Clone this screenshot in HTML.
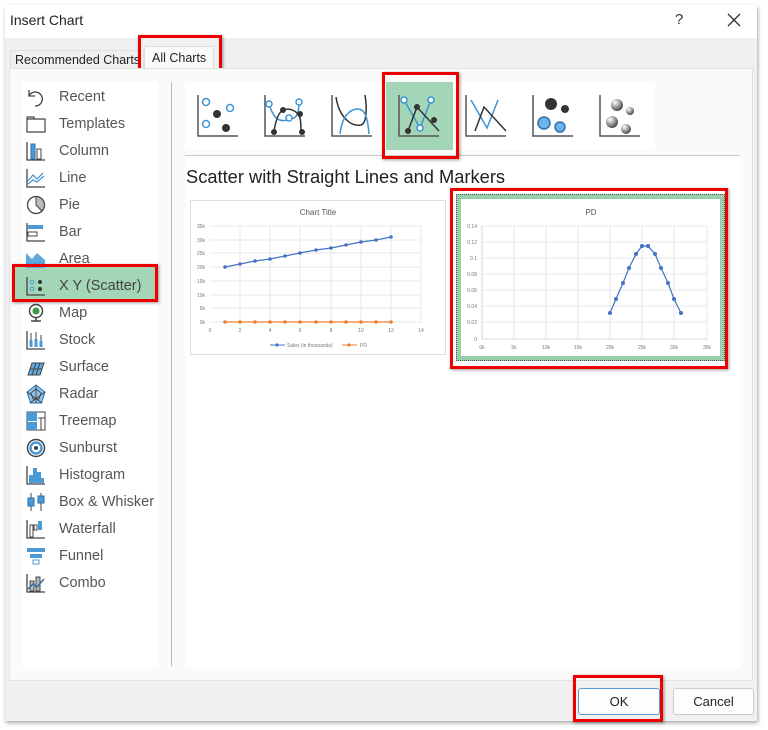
<!DOCTYPE html>
<html><head><meta charset="utf-8"><style>
*{margin:0;padding:0;box-sizing:border-box}
body{width:768px;height:730px;background:#fff;font-family:"Liberation Sans",sans-serif;position:relative;overflow:hidden;color:#333}
.a{position:absolute}
.win{left:5px;top:5px;width:752px;height:716px;background:#f0f0f0;box-shadow:1px 2px 4px rgba(0,0,0,.35)}
.red{border:3px solid #e00;box-shadow:1px 1px 3px rgba(0,0,0,.4)}
.item{position:absolute;left:26px;height:27px;width:130px;font-size:14.5px;color:#555;line-height:27px;margin-top:2px}
.item span{position:absolute;left:33px}
.item svg{position:absolute;left:0;top:3px}
</style></head><body>
<div class="a win"></div>
<div class="a" style="left:5px;top:5px;width:752px;height:33px;background:#fff"></div>
<div class="a" style="left:10px;top:12px;font-size:14px;color:#222">Insert Chart</div>
<div class="a" style="left:675px;top:11px;font-size:15px;color:#333">?</div>
<svg class="a" style="left:727px;top:13px" width="14" height="14"><path d="M1 1L13 13M13 1L1 13" stroke="#333" stroke-width="1.3"/></svg>
<!-- tabs -->
<div class="a" style="left:10px;top:50px;width:134px;height:19px;background:#f0f0f0;border:1px solid #e0e0e0;border-bottom:none"></div>
<div class="a" style="left:15px;top:53px;font-size:12.5px;color:#222">Recommended Charts</div>
<div class="a" style="left:144px;top:46px;width:70px;height:23px;background:#fafafa;border:1px solid #ddd;border-bottom:none"></div>
<div class="a" style="left:152px;top:51px;font-size:12.5px;color:#222">All Charts</div>
<div class="a red" style="left:138px;top:35px;width:84px;height:40px"></div>
<!-- panel -->
<div class="a" style="left:9px;top:68px;width:744px;height:613px;background:#fafafa;border:1px solid #e3e3e3"></div>
<div class="a" style="left:22px;top:82px;width:136px;height:586px;background:#fff"></div>
<div class="a" style="left:171px;top:82px;width:1px;height:584px;background:#bbb"></div>
<div class="a" style="left:185px;top:82px;width:555px;height:586px;background:#fff"></div>
<div class="a" style="left:655px;top:82px;width:85px;height:68px;background:#fafafa"></div>
<div class="a" style="left:185px;top:150px;width:555px;height:6px;background:#fafafa"></div>
<div class="a" style="left:185px;top:155px;width:555px;height:1px;background:#ccc"></div>
<!-- list -->
<div class="a" style="left:15px;top:267px;width:141px;height:33px;background:#a3d5b7"></div>
<div class="item" style="top:82px"><svg width="20" height="20"><path d="M3 3v6h6M3 9a7 7 0 1 1 6 10" fill="none" stroke="#444" stroke-width="1.3"/></svg><span>Recent</span></div>
<div class="item" style="top:109px"><svg width="20" height="20"><path d="M1 3h7v2h11v13H1z M1 5h7" fill="none" stroke="#444" stroke-width="1.2"/></svg><span>Templates</span></div>
<div class="item" style="top:136px"><svg width="20" height="20"><path d="M1 1v18h18" fill="none" stroke="#444" stroke-width="1.3"/><rect x="5" y="3" width="4" height="15" fill="#4a9ad8" stroke="#2f6ea8"/><rect x="11" y="8" width="4" height="10" fill="none" stroke="#444"/></svg><span>Column</span></div>
<div class="item" style="top:163px"><svg width="20" height="20"><path d="M1 1v18h18" fill="none" stroke="#444" stroke-width="1.3"/><path d="M2 13l5-6 4 4 6-6M2 16l5-4 4 2 7-6" fill="none" stroke="#4a9ad8" stroke-width="1.3"/></svg><span>Line</span></div>
<div class="item" style="top:190px"><svg width="20" height="20"><circle cx="10" cy="10" r="8.5" fill="#fff" stroke="#444" stroke-width="1.3"/><path d="M10 10V1.5A8.5 8.5 0 0 1 16 16z" fill="#bbb" stroke="#444"/></svg><span>Pie</span></div>
<div class="item" style="top:217px"><svg width="20" height="20"><path d="M1 1v18h18" fill="none" stroke="#444" stroke-width="1.3"/><rect x="2" y="3" width="15" height="4" fill="#4a9ad8"/><rect x="2" y="10" width="9" height="4" fill="none" stroke="#444"/></svg><span>Bar</span></div>
<div class="item" style="top:244px"><svg width="20" height="20"><path d="M0 4l6 6 5-6 8 7v8H0z" fill="#5fa8e0"/></svg><span>Area</span></div>
<div class="item" style="top:271px;color:#444"><svg width="20" height="20"><path d="M1 1v18h18" fill="none" stroke="#444" stroke-width="1.3"/><circle cx="6" cy="6" r="1.8" fill="none" stroke="#4a9ad8"/><circle cx="6" cy="13" r="1.8" fill="none" stroke="#4a9ad8"/><circle cx="14" cy="6" r="2" fill="#333"/><circle cx="14" cy="13" r="2" fill="#333"/></svg><span>X Y (Scatter)</span></div>
<div class="item" style="top:298px"><svg width="20" height="20"><circle cx="10" cy="8" r="6.5" fill="#fff" stroke="#444" stroke-width="1.5"/><circle cx="10" cy="8" r="3.5" fill="#3a9a4a"/><path d="M5 18h10M10 15v3" stroke="#444" stroke-width="1.5"/></svg><span>Map</span></div>
<div class="item" style="top:325px"><svg width="20" height="20"><path d="M1 1v18h18" fill="none" stroke="#444" stroke-width="1.3"/><path d="M5 3v14M10 2v15M15 5v12" stroke="#444"/><rect x="3.5" y="10" width="3" height="7" fill="#4a9ad8"/><rect x="8.5" y="9" width="3" height="8" fill="#4a9ad8"/><rect x="13.5" y="11" width="3" height="6" fill="#4a9ad8"/></svg><span>Stock</span></div>
<div class="item" style="top:352px"><svg width="20" height="20"><path d="M2 18l4-12h12l-4 12z" fill="#5fa8e0" stroke="#444"/><path d="M4 12h12M10 6l-4 12M14 6l-4 12" stroke="#444"/></svg><span>Surface</span></div>
<div class="item" style="top:379px"><svg width="20" height="20"><path d="M10 1l9 7-3.5 11h-11L1 8z" fill="#8cc4ec" stroke="#2f6ea8"/><path d="M10 1v18M1 8l15 11M19 8L4 19M10 5l5 4-2 6H7L5 9z" fill="none" stroke="#444" stroke-width=".9"/></svg><span>Radar</span></div>
<div class="item" style="top:406px"><svg width="20" height="20"><rect x="1" y="1" width="18" height="18" fill="#fff" stroke="#444"/><rect x="1" y="1" width="10" height="9" fill="#4a9ad8"/><rect x="1" y="11" width="10" height="8" fill="#4a9ad8"/><path d="M12 7h7M15 7v12" stroke="#444"/></svg><span>Treemap</span></div>
<div class="item" style="top:433px"><svg width="20" height="20"><circle cx="10" cy="10" r="8.5" fill="none" stroke="#444" stroke-width="1.5"/><circle cx="10" cy="10" r="5.5" fill="none" stroke="#4a9ad8" stroke-width="2.5"/><circle cx="10" cy="10" r="2" fill="#444"/></svg><span>Sunburst</span></div>
<div class="item" style="top:460px"><svg width="20" height="20"><path d="M1 1v18h18" fill="none" stroke="#444" stroke-width="1.3"/><rect x="3" y="10" width="4" height="8" fill="#4a9ad8"/><rect x="7" y="3" width="4" height="15" fill="#4a9ad8"/><rect x="11" y="7" width="4" height="11" fill="#4a9ad8"/><rect x="15" y="13" width="3" height="5" fill="#4a9ad8"/></svg><span>Histogram</span></div>
<div class="item" style="top:487px"><svg width="20" height="20"><path d="M5 1v18M15 1v18" stroke="#444"/><rect x="2" y="6" width="6" height="8" fill="#4a9ad8" stroke="#2f6ea8"/><rect x="12" y="4" width="6" height="7" fill="#4a9ad8" stroke="#2f6ea8"/></svg><span>Box &amp; Whisker</span></div>
<div class="item" style="top:514px"><svg width="20" height="20"><path d="M1 1v18h18" fill="none" stroke="#444" stroke-width="1.3"/><rect x="4" y="6" width="3" height="12" fill="none" stroke="#444"/><rect x="8" y="6" width="3" height="5" fill="none" stroke="#444"/><rect x="12" y="2" width="4" height="9" fill="#4a9ad8"/></svg><span>Waterfall</span></div>
<div class="item" style="top:541px"><svg width="20" height="20"><rect x="1" y="2" width="18" height="4" fill="#4a9ad8"/><rect x="4" y="8" width="12" height="4" fill="#4a9ad8"/><rect x="7" y="14" width="6" height="4" fill="#fff" stroke="#4a9ad8"/></svg><span>Funnel</span></div>
<div class="item" style="top:568px"><svg width="20" height="20"><path d="M1 1v18h18" fill="none" stroke="#444" stroke-width="1.3"/><rect x="4" y="8" width="4" height="10" fill="#bbb" stroke="#444"/><rect x="10" y="4" width="4" height="14" fill="#bbb" stroke="#444"/><path d="M2 16l5-5 4 3 7-8" fill="none" stroke="#2f6ea8" stroke-width="1.5"/></svg><span>Combo</span></div>
<div class="a red" style="left:12px;top:264px;width:146px;height:38px"></div>
<!-- subtype icons -->
<div class="a" style="left:386px;top:82px;width:67px;height:68px;background:#a3d5b7"></div>
<svg class="a" style="left:185px;top:82px" width="470" height="68" fill="none" stroke-width="1.5">
<g transform="translate(12,12)"><path d="M1 1v41h40" stroke="#555"/><circle cx="9" cy="8" r="3.5" stroke="#3b95d6"/><circle cx="33" cy="14" r="3.5" stroke="#3b95d6"/><circle cx="9" cy="30" r="3.5" stroke="#3b95d6"/><circle cx="20" cy="20" r="4" fill="#333" stroke="none"/><circle cx="29" cy="34" r="4" fill="#333" stroke="none"/></g>
<g transform="translate(79,12)"><path d="M1 1v41h40" stroke="#555"/><path d="M5 10c6 20 14 18 25 14 4-2 5-10 5-16" stroke="#3b95d6"/><path d="M10 38c2-14 5-20 9-22 8-3 15 2 17 8 1 4 1 8 1 14" stroke="#333"/><circle cx="5" cy="10" r="3" fill="#fff" stroke="#3b95d6"/><circle cx="35" cy="8" r="3" fill="#fff" stroke="#3b95d6"/><circle cx="25" cy="24" r="3" fill="#fff" stroke="#3b95d6"/><circle cx="10" cy="38" r="3" fill="#333" stroke="none"/><circle cx="19" cy="16" r="3" fill="#333" stroke="none"/><circle cx="36" cy="20" r="3" fill="#333" stroke="none"/><circle cx="38" cy="38" r="3" fill="#333" stroke="none"/></g>
<g transform="translate(146,12)"><path d="M1 1v41h40" stroke="#555"/><path d="M5 3c3 20 15 30 25 28 6-2 6-18 4-30" stroke="#333"/><path d="M9 40c2-18 10-25 18-25 8 0 10 12 11 25" stroke="#3b95d6"/></g>
<g transform="translate(213,12)"><path d="M1 1v41h40" stroke="#555"/><path d="M6 6l16 28 11-28" stroke="#3b95d6"/><path d="M10 37l9-24 22 24" stroke="#333"/><circle cx="6" cy="6" r="3" fill="#fff" stroke="#3b95d6"/><circle cx="33" cy="6" r="3" fill="#fff" stroke="#3b95d6"/><circle cx="22" cy="34" r="3" fill="#fff" stroke="#3b95d6"/><circle cx="10" cy="37" r="3" fill="#333" stroke="none"/><circle cx="19" cy="13" r="3" fill="#333" stroke="none"/><circle cx="36" cy="26" r="3" fill="#333" stroke="none"/></g>
<g transform="translate(280,12)"><path d="M1 1v41h40" stroke="#555"/><path d="M6 6l16 28 11-28" stroke="#3b95d6"/><path d="M10 37l9-24 22 24" stroke="#333"/></g>
<g transform="translate(347,12)"><path d="M1 1v41h40" stroke="#555"/><circle cx="19" cy="10" r="6" fill="#333" stroke="none"/><circle cx="33" cy="15" r="4" fill="#333" stroke="none"/><circle cx="12" cy="29" r="6" fill="#6cb2ec" stroke="#2f6ea8"/><circle cx="28" cy="33" r="5" fill="#6cb2ec" stroke="#2f6ea8"/></g>
<g transform="translate(414,12)"><defs><radialGradient id="g" cx=".35" cy=".3" r=".8"><stop offset="0" stop-color="#fff"/><stop offset=".5" stop-color="#999"/><stop offset="1" stop-color="#333"/></radialGradient></defs><path d="M1 1v41h40" stroke="#555"/><circle cx="18" cy="11" r="6" fill="url(#g)" stroke="none"/><circle cx="31" cy="17" r="4" fill="url(#g)" stroke="none"/><circle cx="13" cy="28" r="6" fill="url(#g)" stroke="none"/><circle cx="27" cy="35" r="5" fill="url(#g)" stroke="none"/></g>
</svg>
<div class="a red" style="left:382px;top:72px;width:77px;height:87px"></div>
<div class="a" style="left:186px;top:166px;font-size:18.3px;color:#222">Scatter with Straight Lines and Markers</div>
<!-- left chart -->
<svg class="a" style="left:190px;top:200px" width="257" height="156" font-family="Liberation Sans" fill="#777">
<rect x=".5" y=".5" width="255" height="154" fill="#fff" stroke="#ddd"/>
<text x="128" y="15" font-size="8" text-anchor="middle" fill="#555">Chart Title</text>
<g stroke="#e3e3e3" stroke-width=".8">
<path d="M20 26h211M20 40h211M20 53h211M20 67h211M20 81h211M20 95h211M20 108h211M20 122h211"/>
<path d="M50 26v96M80 26v96M110 26v96M141 26v96M171 26v96M201 26v96M231 26v96"/></g>
<g font-size="5" text-anchor="end"><text x="15" y="28">35k</text><text x="15" y="42">30k</text><text x="15" y="55">25k</text><text x="15" y="69">20k</text><text x="15" y="83">15k</text><text x="15" y="97">10k</text><text x="15" y="110">5k</text><text x="15" y="124">0k</text></g>
<g font-size="5" text-anchor="middle"><text x="20" y="132">0</text><text x="50" y="132">2</text><text x="80" y="132">4</text><text x="110" y="132">6</text><text x="141" y="132">8</text><text x="171" y="132">10</text><text x="201" y="132">12</text><text x="231" y="132">14</text></g>
<polyline points="35,67 50,64 65,61 80,59 95,56 110,53 126,50 141,48 156,45 171,42 186,40 201,37" fill="none" stroke="#4472c4" stroke-width="1.2"/>
<g fill="#4472c4"><circle cx="35" cy="67" r="1.8"/><circle cx="50" cy="64" r="1.8"/><circle cx="65" cy="61" r="1.8"/><circle cx="80" cy="59" r="1.8"/><circle cx="95" cy="56" r="1.8"/><circle cx="110" cy="53" r="1.8"/><circle cx="126" cy="50" r="1.8"/><circle cx="141" cy="48" r="1.8"/><circle cx="156" cy="45" r="1.8"/><circle cx="171" cy="42" r="1.8"/><circle cx="186" cy="40" r="1.8"/><circle cx="201" cy="37" r="1.8"/></g>
<path d="M35 122H201" stroke="#ed7d31" stroke-width="1.2"/>
<g fill="#ed7d31"><circle cx="35" cy="122" r="1.8"/><circle cx="50" cy="122" r="1.8"/><circle cx="65" cy="122" r="1.8"/><circle cx="80" cy="122" r="1.8"/><circle cx="95" cy="122" r="1.8"/><circle cx="110" cy="122" r="1.8"/><circle cx="126" cy="122" r="1.8"/><circle cx="141" cy="122" r="1.8"/><circle cx="156" cy="122" r="1.8"/><circle cx="171" cy="122" r="1.8"/><circle cx="186" cy="122" r="1.8"/><circle cx="201" cy="122" r="1.8"/></g>
<path d="M80 145h15" stroke="#4472c4"/><circle cx="87" cy="145" r="1.6" fill="#4472c4"/><text x="97" y="147" font-size="5">Sales (in thousands)</text>
<path d="M152 145h15" stroke="#ed7d31"/><circle cx="159" cy="145" r="1.6" fill="#ed7d31"/><text x="170" y="147" font-size="5">PD</text>
</svg>
<!-- right chart -->
<div class="a red" style="left:450px;top:188px;width:278px;height:181px"></div>
<div class="a" style="left:456px;top:194px;width:269px;height:167px;background:#96cfa9;border:1px dotted #555"></div>
<svg class="a" style="left:461px;top:199px" width="259" height="157" font-family="Liberation Sans" fill="#777">
<rect width="259" height="157" fill="#fff"/>
<text x="130" y="16" font-size="8" text-anchor="middle" fill="#555">PD</text>
<g stroke="#e3e3e3" stroke-width=".8">
<path d="M21 27h225M21 43h225M21 59h225M21 75h225M21 91h225M21 107h225M21 123h225"/>
<path d="M53 27v113M85 27v113M117 27v113M149 27v113M181 27v113M213 27v113M246 27v113"/></g>
<path d="M21 27v113h225" stroke="#ccc" fill="none" stroke-width=".8"/>
<g font-size="5" text-anchor="end"><text x="16" y="29">0.14</text><text x="16" y="45">0.12</text><text x="16" y="61">0.1</text><text x="16" y="77">0.08</text><text x="16" y="93">0.06</text><text x="16" y="109">0.04</text><text x="16" y="125">0.02</text><text x="16" y="142">0</text></g>
<g font-size="5" text-anchor="middle"><text x="21" y="150">0k</text><text x="53" y="150">5k</text><text x="85" y="150">10k</text><text x="117" y="150">15k</text><text x="149" y="150">20k</text><text x="181" y="150">25k</text><text x="213" y="150">30k</text><text x="246" y="150">35k</text></g>
<polyline points="149,114 155,100 162,84 168,69 175,55 181,47 187,47 194,55 200,69 207,84 213,100 220,114" fill="none" stroke="#4472c4" stroke-width="1.2"/>
<g fill="#4472c4"><circle cx="149" cy="114" r="2"/><circle cx="155" cy="100" r="2"/><circle cx="162" cy="84" r="2"/><circle cx="168" cy="69" r="2"/><circle cx="175" cy="55" r="2"/><circle cx="181" cy="47" r="2"/><circle cx="187" cy="47" r="2"/><circle cx="194" cy="55" r="2"/><circle cx="200" cy="69" r="2"/><circle cx="207" cy="84" r="2"/><circle cx="213" cy="100" r="2"/><circle cx="220" cy="114" r="2"/></g>
</svg>
<!-- buttons -->
<div class="a" style="left:578px;top:688px;width:82px;height:27px;background:#fdfdfd;border:1px solid #5b9bd5;border-radius:3px;font-size:13px;text-align:center;line-height:25px;color:#222">OK</div>
<div class="a red" style="left:573px;top:675px;width:90px;height:47px"></div>
<div class="a" style="left:673px;top:688px;width:81px;height:27px;background:#fdfdfd;border:1px solid #ccc;border-radius:3px;font-size:13px;text-align:center;line-height:25px;color:#222">Cancel</div>
</body></html>
